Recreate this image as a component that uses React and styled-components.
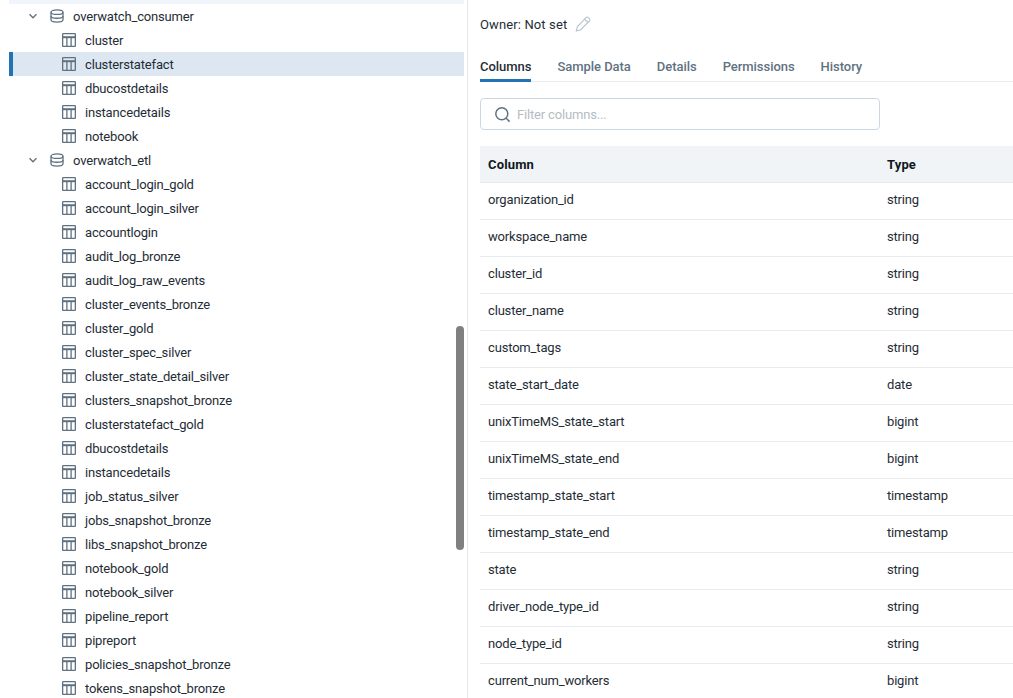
import React from 'react';
import styled, { createGlobalStyle } from 'styled-components';

const GlobalStyle = createGlobalStyle`
  html, body {
    margin: 0;
    padding: 0;
    height: 100%;
    overflow: hidden;
    background: #fff;
  }
  body {
    font-family: Roboto, "Noto Sans", sans-serif;
    font-size: 13px;
    color: #1b3139;
  }
`;

const Page = styled.div`
  display: flex;
  width: 1013px;
  height: 698px;
  overflow: hidden;
`;

const Sidebar = styled.aside`
  position: relative;
  box-sizing: border-box;
  width: 468px;
  height: 698px;
  padding-left: 9px;
  padding-right: 3px;
  border-right: 1px solid #e4e9ee;
  overflow: hidden;
  flex: none;
`;

const TopStrip = styled.div`
  height: 4px;
  background: #f0f5fb;
`;

const Row = styled.div`
  display: flex;
  align-items: center;
  box-sizing: border-box;
  height: 24px;
  padding-left: ${p => (p.$schema ? '19px' : '52px')};
  background: ${p => (p.$selected ? '#dce7f2' : 'transparent')};
  border-left: ${p => (p.$selected ? '4px solid #2272b4' : '0')};
  ${p => p.$selected && 'padding-left: 48px;'}
`;

const RowLabel = styled.span`
  margin-left: 8px;
  color: #1f2d36;
  letter-spacing: -0.17px;
  white-space: nowrap;
`;

const Scrollbar = styled.div`
  position: absolute;
  top: 326px;
  left: 456px;
  width: 8px;
  height: 224px;
  border-radius: 4px;
  background: #808080;
`;

const Main = styled.main`
  flex: 1;
  min-width: 0;
  padding-left: 12px;
`;

const Owner = styled.div`
  display: flex;
  align-items: center;
  height: 18px;
  margin-top: 15px;
  letter-spacing: 0.12px;
  color: #1f2d36;
`;

const EditIcon = styled.svg`
  margin-left: 8px;
  width: 16px;
  height: 16px;
`;

const Tabs = styled.div`
  display: flex;
  gap: 26px;
  margin-top: 15px;
  height: 34px;
  box-sizing: border-box;
  border-bottom: 1px solid #e8ecf0;
`;

const Tab = styled.div`
  position: relative;
  padding-top: 11px;
  font-weight: 500;
  letter-spacing: -0.04px;
  color: ${p => (p.$active ? '#1f2d36' : '#5f7281')};
  &::after {
    content: '';
    display: ${p => (p.$active ? 'block' : 'none')};
    position: absolute;
    left: 0;
    right: 0;
    bottom: -1px;
    height: 3px;
    background: #2272b4;
  }
`;

const Search = styled.div`
  display: flex;
  align-items: center;
  box-sizing: border-box;
  width: 400px;
  height: 32px;
  margin-top: 16px;
  padding-left: 13px;
  border: 1px solid #cbd7e2;
  border-radius: 4px;
`;

const SearchText = styled.span`
  margin-left: 6px;
  letter-spacing: -0.17px;
  color: #b5bcc3;
`;

const Table = styled.div`
  margin-top: 16px;
`;

const Cells = styled.div`
  display: grid;
  grid-template-columns: 399px 1fr;
  align-items: center;
  height: 37px;
  box-sizing: border-box;
  padding-left: 8px;
  padding-bottom: ${p => (p.$head ? '0' : '4px')};
  letter-spacing: ${p => (p.$head ? '0.15px' : '-0.17px')};
  background: ${p => (p.$head ? '#f1f4f7' : '#fff')};
  border-bottom: 1px solid ${p => (p.$head ? '#e4e9ee' : '#e8ecf0')};
  font-weight: ${p => (p.$head ? 700 : 400)};
  color: ${p => (p.$head ? '#11171c' : '#1f2d36')};
`;

const ChevronDown = () => (
  <svg width="10" height="10" viewBox="0 0 10 10" fill="none" stroke="#5f7281" strokeWidth="1.3">
    <path d="M1.5 3.2 5 6.8 8.5 3.2" />
  </svg>
);

const SchemaIcon = () => (
  <svg width="16" height="16" viewBox="0 0 16 16" fill="none" stroke="#5f7281" strokeWidth="1.3" style={{ marginLeft: 11 }}>
    <ellipse cx="8" cy="4.2" rx="6" ry="2.25" />
    <path d="M2 4.2v7.6c0 1.25 2.7 2.25 6 2.25s6-1 6-2.25V4.2" />
    <path d="M2 8c0 1.25 2.7 2.25 6 2.25S14 9.25 14 8" />
  </svg>
);

const TableIcon = () => (
  <svg width="16" height="16" viewBox="0 0 16 16" fill="none" stroke="#5f7281" strokeWidth="1.3">
    <rect x="1.65" y="1.65" width="12.7" height="12.7" rx="0.6" />
    <path d="M1.65 5.2h12.7" strokeWidth="2" />
    <path d="M5.9 6v8M10.1 6v8" />
  </svg>
);

const consumerTables = ['cluster', 'clusterstatefact', 'dbucostdetails', 'instancedetails', 'notebook'];
const etlTables = [
  'account_login_gold', 'account_login_silver', 'accountlogin', 'audit_log_bronze', 'audit_log_raw_events',
  'cluster_events_bronze', 'cluster_gold', 'cluster_spec_silver', 'cluster_state_detail_silver',
  'clusters_snapshot_bronze', 'clusterstatefact_gold', 'dbucostdetails', 'instancedetails', 'job_status_silver',
  'jobs_snapshot_bronze', 'libs_snapshot_bronze', 'notebook_gold', 'notebook_silver', 'pipeline_report',
  'pipreport', 'policies_snapshot_bronze', 'tokens_snapshot_bronze',
];

const columns = [
  ['organization_id', 'string'], ['workspace_name', 'string'], ['cluster_id', 'string'], ['cluster_name', 'string'],
  ['custom_tags', 'string'], ['state_start_date', 'date'], ['unixTimeMS_state_start', 'bigint'],
  ['unixTimeMS_state_end', 'bigint'], ['timestamp_state_start', 'timestamp'], ['timestamp_state_end', 'timestamp'],
  ['state', 'string'], ['driver_node_type_id', 'string'], ['node_type_id', 'string'], ['current_num_workers', 'bigint'],
];

const SchemaRow = ({ name }) => (
  <Row $schema>
    <ChevronDown />
    <SchemaIcon />
    <RowLabel>{name}</RowLabel>
  </Row>
);

const TableRow = ({ name, selected }) => (
  <Row $selected={selected}>
    <TableIcon />
    <RowLabel>{name}</RowLabel>
  </Row>
);

export default function App() {
  return (
    <Page>
      <GlobalStyle />
      <Sidebar>
        <TopStrip />
        <SchemaRow name="overwatch_consumer" />
        {consumerTables.map(t => (
          <TableRow key={t} name={t} selected={t === 'clusterstatefact'} />
        ))}
        <SchemaRow name="overwatch_etl" />
        {etlTables.map(t => (
          <TableRow key={t} name={t} />
        ))}
        <Scrollbar />
      </Sidebar>
      <Main>
        <Owner>
          Owner: Not set
          <EditIcon viewBox="0 0 16 16" fill="none" stroke="#b9c7d4" strokeWidth="1.2">
            <path d="M11 1.6a1.6 1.6 0 0 1 2.3 0l1.1 1.1a1.6 1.6 0 0 1 0 2.3l-9 9-4 .9.9-4z" />
            <path d="M9.6 3 13 6.4" />
          </EditIcon>
        </Owner>
        <Tabs>
          <Tab $active>Columns</Tab>
          <Tab>Sample Data</Tab>
          <Tab>Details</Tab>
          <Tab>Permissions</Tab>
          <Tab>History</Tab>
        </Tabs>
        <Search>
          <svg width="17" height="17" viewBox="0 0 17 17" fill="none" stroke="#5f7281" strokeWidth="1.5">
            <circle cx="7.8" cy="7.8" r="6" />
            <path d="M12.2 12.2 15.6 15.6" />
          </svg>
          <SearchText>Filter columns...</SearchText>
        </Search>
        <Table>
          <Cells $head>
            <span>Column</span>
            <span>Type</span>
          </Cells>
          {columns.map(([name, type]) => (
            <Cells key={name}>
              <span>{name}</span>
              <span>{type}</span>
            </Cells>
          ))}
        </Table>
      </Main>
    </Page>
  );
}
